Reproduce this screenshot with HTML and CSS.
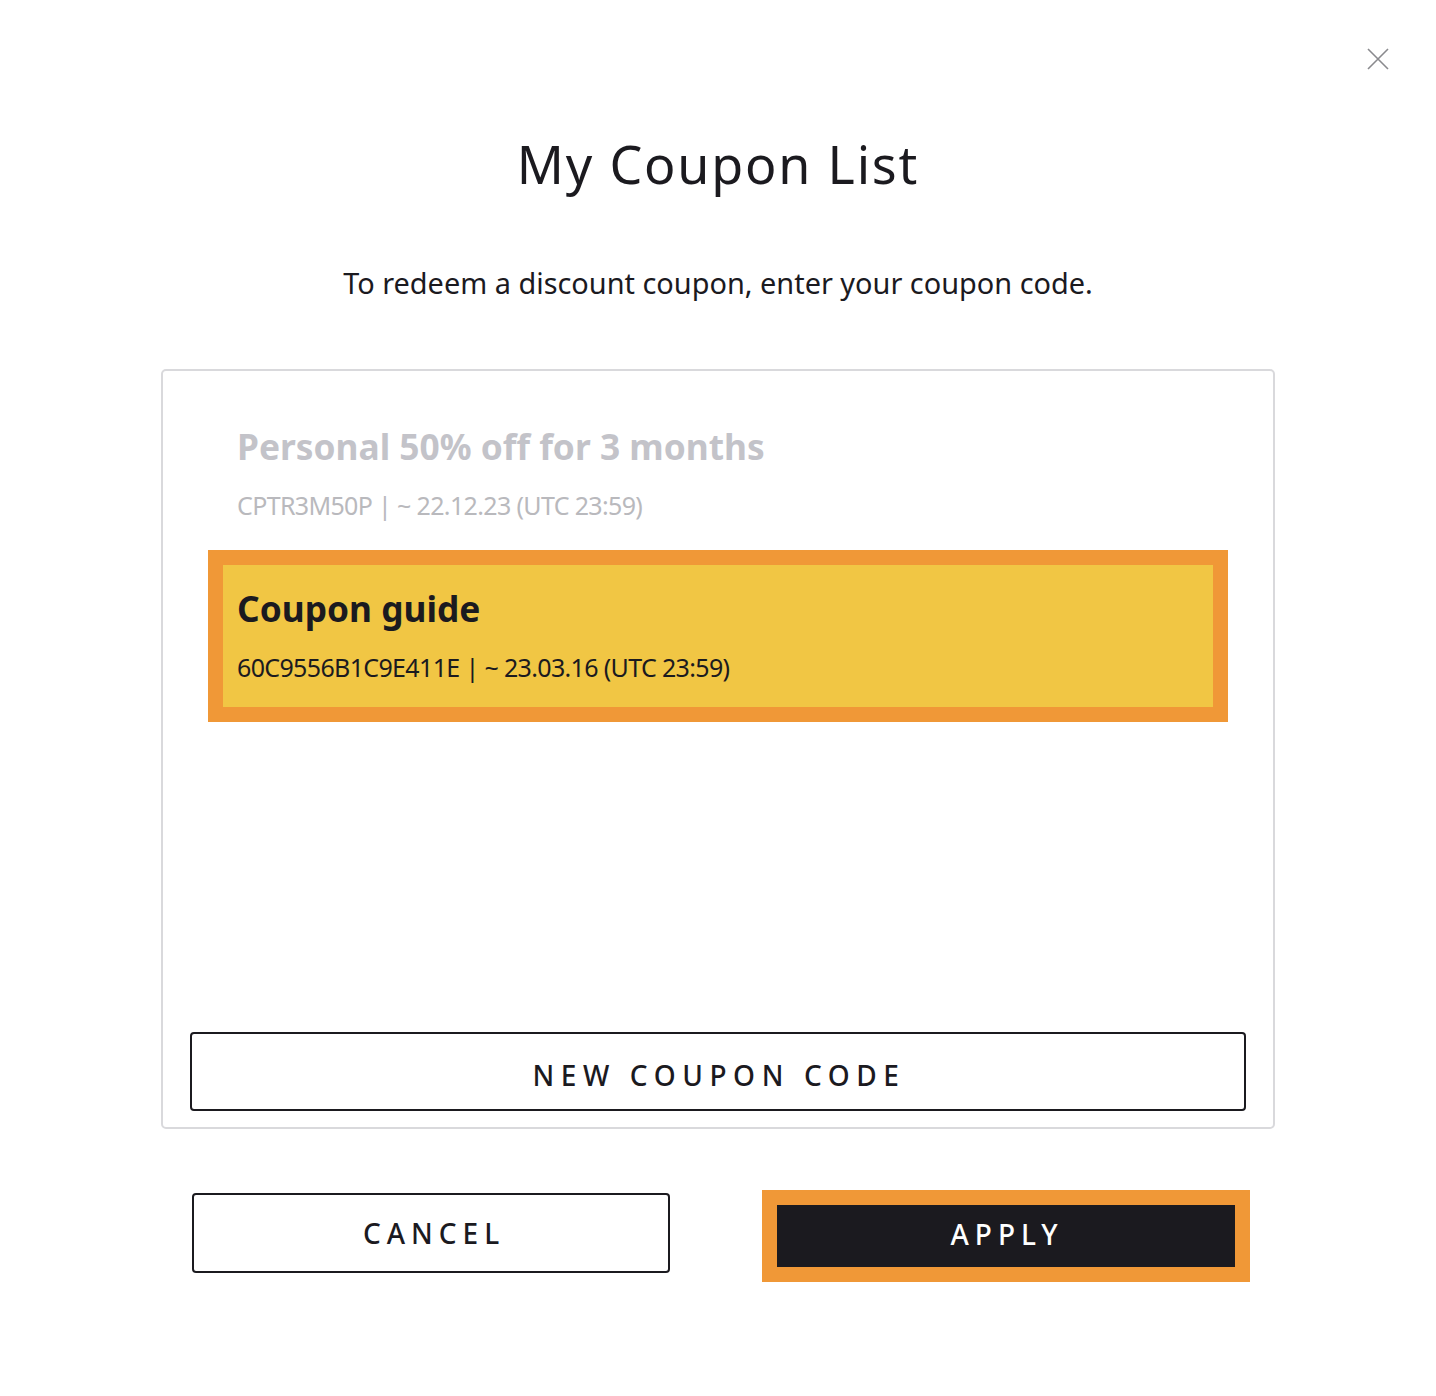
FILE: index.html
```html
<!DOCTYPE html>
<html lang="en">
<head>
<meta charset="utf-8">
<title>My Coupon List</title>
<link rel="stylesheet" href="styles.css">
</head>
<body>
<div class="modal">
  <button class="close" aria-label="Close">
    <svg width="22" height="22" viewBox="0 0 22 22"><path d="M1 1L21 21M21 1L1 21" stroke="#8a8a8e" stroke-width="1.6" fill="none"/></svg>
  </button>
  <h1 class="title">My Coupon List</h1>
  <p class="intro">To redeem a discount coupon, enter your coupon code.</p>
  <div class="box">
    <ul class="list">
      <li class="coupon disabled">
        <div class="coupon-name">Personal 50% off for 3 months</div>
        <div class="coupon-meta">CPTR3M50P | ~ 22.12.23 (UTC 23:59)</div>
      </li>
      <li class="coupon selected">
        <div class="coupon-name">Coupon guide</div>
        <div class="coupon-meta">60C9556B1C9E411E | ~ 23.03.16 (UTC 23:59)</div>
      </li>
    </ul>
    <button class="btn btn-new">NEW COUPON CODE</button>
  </div>
  <div class="actions">
    <button class="btn btn-cancel">CANCEL</button>
    <button class="btn btn-apply">APPLY</button>
  </div>
</div>
</body>
</html>
```
FILE: styles.css
```css
* { box-sizing: border-box; }
html, body { margin: 0; padding: 0; background: #fff; }
body { font-family: "Noto Sans", "Open Sans", sans-serif; color: #1b1a1f; }

.modal { position: relative; width: 1436px; height: 1396px; padding-top: 134px; overflow: hidden; }

.close {
  position: absolute; top: 48px; right: 47px;
  width: 22px; height: 22px; padding: 0; border: 0; background: none;
}
.close svg { display: block; }

.title {
  margin: 0; text-align: center;
  font-size: 52px; line-height: 60px; font-weight: 400; letter-spacing: 1.8px;
}
.intro {
  margin: 69px 0 0; text-align: center;
  font-size: 28.9px; line-height: 40px; font-weight: 400;
}

.box {
  margin: 66px auto 0; width: 1114px; height: 760px;
  border: 2px solid #d9d9dc; border-radius: 5px;
  display: flex; flex-direction: column;
}
.list { list-style: none; margin: 0; padding: 32px 60px 0; flex: 1; }
.coupon { padding: 20px 14px 22px; margin-bottom: 20px; }
.coupon-name { font-size: 35.3px; line-height: 46px; font-weight: 700; }
.coupon-meta { margin-top: 18px; font-size: 25px; line-height: 36px; font-stretch: semi-condensed; letter-spacing: -0.65px; }
.disabled .coupon-name { color: #c3c3c9; }
.disabled .coupon-meta { color: #b9b9bd; }
.selected { background: #f1c644; outline: 15px solid #f09837; }

.btn {
  font-family: "Noto Sans", "Open Sans", sans-serif;
  font-size: 28px; letter-spacing: 6px; font-weight: 500;
  color: #1b1a1f; background: #fff; cursor: pointer; padding: 0 0 0 6px;
}
.btn-new {
  margin: 0 27px 16px; height: 79px; padding: 6px 0 0 2px; letter-spacing: 6.6px;
  border: 2px solid #1b1a1f; border-radius: 4px;
}
.actions {
  width: 1114px; margin: 61px auto 0; padding: 0 25px 0 31px;
  display: flex; justify-content: space-between; align-items: flex-start;
}
.btn-cancel {
  margin-top: 3px; width: 478px; height: 80px;
  border: 2px solid #1b1a1f; border-radius: 4px;
}
.btn-apply {
  width: 488px; height: 92px; padding: 0 0 4px 2px;
  border: 15px solid #f09837; background: #1b1a1f; color: #fff;
}
```
